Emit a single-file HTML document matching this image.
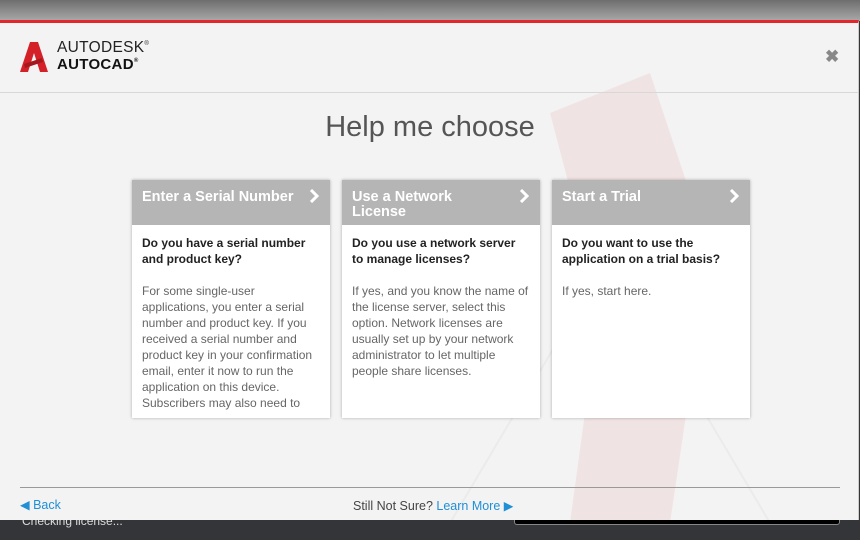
<!DOCTYPE html>
<html><head><meta charset="utf-8"><style>
*{margin:0;padding:0;box-sizing:border-box}
body{width:860px;height:540px;overflow:hidden;position:relative;background:#333538;font-family:"Liberation Sans",Arial,sans-serif}
.top{position:absolute;left:0;top:0;width:860px;height:21px;background:linear-gradient(180deg,#6e6e6e,#a9a9a9)}
.dlg{position:absolute;left:0;top:20px;width:859px;height:500px;background:#f3f3f3;border-top:3px solid #e2262b;border-right:1px solid #ccc;overflow:hidden}
.deco{position:absolute;left:450px;top:30px;width:320px;height:470px;opacity:.07}
.hdr{position:absolute;left:0;top:0;width:859px;height:70px;border-bottom:1px solid #d8d8d8}
.logo{position:absolute;left:20px;top:19px}
.t1{position:absolute;left:57px;top:16px;font-size:15.5px;color:#222;letter-spacing:.3px}
.t2{position:absolute;left:57px;top:33px;font-size:15px;font-weight:bold;color:#111;letter-spacing:.3px}
.t1 sup,.t2 sup{font-size:6px;vertical-align:top;position:relative;top:2px}
.x{position:absolute;left:825px;top:24px;font-size:17px;font-weight:bold;color:#888}
h1{position:absolute;left:0;width:860px;top:88px;text-align:center;font-weight:normal;font-size:29px;color:#555}
.card{position:absolute;top:157px;width:198px;height:238px;background:#fff;box-shadow:0 0 3px rgba(0,0,0,.3)}
.ch{height:45px;background:#b5b5b5;color:#fff;font-weight:bold;font-size:14.5px;padding:10px 10px 0 10px;line-height:15px;position:relative;white-space:nowrap}
.ch svg{position:absolute;right:11px;top:9px}
.q{font-size:12px;font-weight:bold;color:#222;padding:10px 10px 0 10px;line-height:16px}
.p{font-size:12px;color:#666;padding:16px 10px 0 10px;line-height:16px}
.foot{position:absolute;left:20px;top:464px;width:820px;border-top:1px solid #999}
.back{position:absolute;left:20px;top:474px;font-size:12.5px;color:#1f8fd6}
.still{position:absolute;left:353px;top:475px;font-size:12.5px;color:#444}
.still span{color:#1f8fd6}
.chk{position:absolute;left:22px;top:514px;font-size:12px;color:#ddd}
.bar{position:absolute;left:514px;top:519px;width:326px;height:6px;background:#000;border:1px solid #888;border-top:none;border-radius:0 0 3px 3px}
</style></head><body>
<div class="top"></div>
<div class="chk">Checking license...</div>
<div class="bar"></div>
<div class="dlg">
<svg class="deco" viewBox="0 0 320 470"><path d="M100 60 L200 20 L260 200 L220 470 L120 470 L150 250Z" fill="#c22"/><path d="M0 470 L160 200 L320 470" stroke="#888" fill="none" stroke-width="2"/></svg>
<div class="hdr">
<svg class="logo" width="28" height="30" viewBox="0 0 28 30"><path d="M10 0 H18 L28 30 H20 L14 11 L8 30 H0Z" fill="#d42027"/><path d="M4 22 L22 16 L23 20 L5 26Z" fill="#a5181d"/></svg>
<div class="t1">AUTODESK<sup>®</sup></div>
<div class="t2">AUTOCAD<sup>®</sup></div>
<div class="x">✖</div>
</div>
<h1>Help me choose</h1>
<div class="card" style="left:132px"><div class="ch">Enter a Serial Number<svg width="10" height="14"><path d="M2 1 L8 7 L2 13" stroke="#fff" stroke-width="3" fill="none"/></svg></div>
<div class="q">Do you have a serial number and product key?</div>
<div class="p">For some single-user applications, you enter a serial number and product key. If you received a serial number and product key in your confirmation email, enter it now to run the application on this device. Subscribers may also need to</div></div>
<div class="card" style="left:342px"><div class="ch">Use a Network<br>License<svg width="10" height="14"><path d="M2 1 L8 7 L2 13" stroke="#fff" stroke-width="3" fill="none"/></svg></div>
<div class="q">Do you use a network server to manage licenses?</div>
<div class="p">If yes, and you know the name of the license server, select this option. Network licenses are usually set up by your network administrator to let multiple people share licenses.</div></div>
<div class="card" style="left:552px"><div class="ch">Start a Trial<svg width="10" height="14"><path d="M2 1 L8 7 L2 13" stroke="#fff" stroke-width="3" fill="none"/></svg></div>
<div class="q">Do you want to use the application on a trial basis?</div>
<div class="p">If yes, start here.</div></div>
<div class="foot"></div>
<div class="back">◀ Back</div>
<div class="still">Still Not Sure? <span>Learn More ▶</span></div>
</div>
</body></html>
